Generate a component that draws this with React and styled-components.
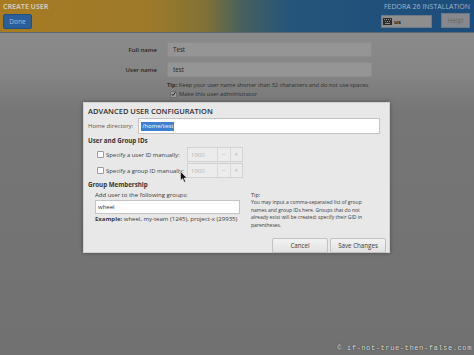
import React from "react";
import styled, { createGlobalStyle } from "styled-components";

const GlobalStyle = createGlobalStyle`
  html, body {
    margin: 0;
    padding: 0;
  }
  body {
    width: 474px;
    height: 355px;
    overflow: hidden;
    font-family: "Open Sans", "Noto Sans", sans-serif;
    background: #727272;
  }
`;

const Page = styled.div`
  position: relative;
  display: flex;
  flex-direction: column;
  width: 474px;
  height: 355px;
  background: linear-gradient(#8a8a8a 33px, #868686 70px, #767676 110px, #717171 100%);
`;

const Header = styled.div`
  height: 33px;
  flex-shrink: 0;
  display: flex;
  justify-content: space-between;
  padding: 3px 4px 0 3px;
  box-sizing: border-box;
  background: linear-gradient(
    90deg,
    #a77b22 0%,
    #9d7a2a 32%,
    #827236 43%,
    #47605c 51%,
    #25557a 61%,
    #1c4c7c 100%
  );
  border-bottom: 1px solid #5d6670;
`;

const HeaderLeft = styled.div`
  display: flex;
  flex-direction: column;
  gap: 3px;
`;

const HeaderRight = styled.div`
  display: flex;
  flex-direction: column;
  align-items: flex-end;
  gap: 2px;
`;

const Spoke = styled.div`
  font-size: 7px;
  font-weight: 700;
  color: #d2c6ae;
  line-height: 8px;
`;

const Product = styled.div`
  font-size: 7px;
  color: #a3b6ca;
  line-height: 8px;
`;

const DoneButton = styled.div`
  width: 29px;
  height: 15px;
  border-radius: 2px;
  background: #2b5f9c;
  border: 1px solid #254f80;
  box-sizing: border-box;
  color: #a9bbd3;
  font-size: 6.5px;
  display: flex;
  align-items: center;
  justify-content: center;
`;

const HeaderTools = styled.div`
  display: flex;
  align-items: center;
  gap: 9px;
`;

const Layout = styled.div`
  width: 51px;
  height: 13px;
  margin-top: 2px;
  background: #8e8e8e;
  border: 1px solid #6f7a86;
  box-sizing: border-box;
  display: flex;
  align-items: center;
  gap: 2px;
  padding-left: 1px;
  font-size: 6px;
  font-weight: 700;
  color: #222;
`;

const HelpButton = styled.div`
  width: 29px;
  height: 15px;
  background: #85898e;
  border: 1px solid #6e7782;
  box-sizing: border-box;
  color: #666;
  font-size: 6.5px;
  display: flex;
  align-items: center;
  justify-content: center;
`;

const Form = styled.div`
  display: grid;
  grid-template-columns: 157px 205px;
  column-gap: 10px;
  row-gap: 5px;
  align-items: center;
  padding-top: 9px;
`;

const Label = styled.div`
  text-align: right;
  font-size: 6px;
  font-weight: 600;
  color: #262626;
`;

const BgInput = styled.div`
  height: 15px;
  background: #959595;
  border: 1px solid #8c8c8c;
  box-sizing: border-box;
  font-size: 6.2px;
  color: #262626;
  display: flex;
  align-items: center;
  padding-left: 5px;
`;

const Hint = styled.div`
  grid-column: 2;
  font-size: 5.7px;
  color: #2e2e2e;
  white-space: nowrap;
  margin-top: -1px;
  b {
    font-weight: 700;
  }
`;

const AdminRow = styled.div`
  grid-column: 2;
  display: flex;
  align-items: center;
  gap: 2px;
  padding-left: 3px;
  margin-top: -4px;
  font-size: 5.8px;
  color: #2e2e2e;
`;

const Dialog = styled.div`
  position: absolute;
  left: 83px;
  top: 102px;
  width: 307px;
  height: 151px;
  box-sizing: border-box;
  background: #e8e8e8;
  border: 1px solid #d0d0d0;
  box-shadow: 0 0 4px rgba(0, 0, 0, 0.35);
  padding: 2px 3px 0 4px;
  color: #3a3a3a;
  font-size: 6px;
`;

const Title = styled.div`
  font-size: 7.5px;
  font-weight: 600;
  color: #2e2e2e;
  line-height: 12px;
`;

const HomeRow = styled.div`
  display: flex;
  align-items: center;
  gap: 5px;
  margin-top: 1px;
  padding-right: 6px;
`;

const Field = styled.div`
  flex: ${(p) => (p.grow ? 1 : "none")};
  height: ${(p) => p.h || 15}px;
  background: #ffffff;
  border: 1px solid #c4c4c4;
  box-sizing: border-box;
  display: flex;
  align-items: center;
  padding-left: 2px;
  font-size: 6px;
  color: #2e2e2e;
`;

const Selected = styled.span`
  background: #3e7fd0;
  color: #ffffff;
  line-height: 9px;
  padding: 0 1px;
`;

const Section = styled.div`
  font-size: 6.2px;
  font-weight: 700;
  color: #333;
  line-height: 10px;
  margin-top: ${(p) => p.mt || 0}px;
`;

const SpinRow = styled.div`
  display: flex;
  align-items: center;
  margin-left: 9px;
  margin-top: ${(p) => p.mt || 0}px;
`;

const Check = styled.div`
  width: 7px;
  height: 7px;
  box-sizing: border-box;
  border: 1px solid ${(p) => (p.dim ? "#6e6e6e" : "#9a9a9a")};
  background: ${(p) => (p.dim ? "#9a9a9a" : "#fafafa")};
  border-radius: 1px;
  display: flex;
  align-items: center;
  justify-content: center;
`;

const CheckText = styled.div`
  width: 81px;
  padding-left: 2px;
  font-size: 5.9px;
  color: #3a3a3a;
`;

const Spin = styled.div`
  display: flex;
  height: 15px;
  width: 56px;
  box-sizing: border-box;
  border: 1px solid #d2d2d2;
  background: #ececec;
`;

const SpinEntry = styled.div`
  width: 26px;
  padding-left: 3px;
  display: flex;
  align-items: center;
  color: #b4b4b4;
  font-size: 6px;
`;

const SpinBtn = styled.div`
  flex: 1;
  border-left: 1px solid #d8d8d8;
  display: flex;
  align-items: center;
  justify-content: center;
  color: #bcbcbc;
  font-size: 7px;
`;

const Columns = styled.div`
  display: flex;
  gap: 11px;
  margin-left: 7px;
`;

const LeftCol = styled.div`
  width: 145px;
  display: flex;
  flex-direction: column;
`;

const Plain = styled.div`
  font-size: 6px;
  line-height: 10px;
  color: ${(p) => p.color || "#3a3a3a"};
  white-space: nowrap;
  b {
    font-weight: 700;
  }
`;

const TipCol = styled.div`
  width: 122px;
  font-size: 5px;
  line-height: 7.5px;
  color: #3a3a3a;
  padding-top: 1px;
`;

const TipHead = styled.div`
  font-size: 5.5px;
  line-height: 8px;
  color: #333;
`;

const Buttons = styled.div`
  display: flex;
  justify-content: flex-end;
  gap: 2px;
  margin-top: 9px;
`;

const DialogButton = styled.div`
  width: 56px;
  height: 15px;
  box-sizing: border-box;
  border: 1px solid #c2c2c2;
  border-radius: 2px;
  background: linear-gradient(#f2f2f2, #e2e2e2);
  font-size: 6.2px;
  color: #3a3a3a;
  display: flex;
  align-items: center;
  justify-content: center;
`;

const Pointer = styled.svg`
  position: absolute;
  left: 180px;
  top: 171px;
`;

const Watermark = styled.div`
  position: absolute;
  right: 2px;
  bottom: 3px;
  font-family: "Liberation Mono", "DejaVu Sans Mono", monospace;
  font-size: 7.2px;
  color: #e4e4e4;
  text-shadow: 0 0 1px #333, 0 0 1px #333;
  letter-spacing: 0.5px;
`;

const CheckMark = ({ color }) => (
  <svg width="6" height="6" viewBox="0 0 6 6">
    <path d="M0.8 3.2 L2.4 4.8 L5.3 1" fill="none" stroke={color} strokeWidth="1.2" />
  </svg>
);

const KeyboardIcon = () => (
  <svg width="9" height="7" viewBox="0 0 9 7">
    <rect x="0" y="0" width="9" height="7" fill="#2a2a2a" />
    <rect x="1" y="1" width="1" height="1" fill="#8e8e8e" />
    <rect x="3" y="1" width="1" height="1" fill="#8e8e8e" />
    <rect x="5" y="1" width="1" height="1" fill="#8e8e8e" />
    <rect x="7" y="1" width="1" height="1" fill="#8e8e8e" />
    <rect x="2" y="3" width="1" height="1" fill="#8e8e8e" />
    <rect x="4" y="3" width="1" height="1" fill="#8e8e8e" />
    <rect x="6" y="3" width="1" height="1" fill="#8e8e8e" />
    <rect x="2" y="5" width="5" height="1" fill="#8e8e8e" />
  </svg>
);

class App extends React.Component {
  render() {
    return (
      <>
        <GlobalStyle />
        <Page>
          <Header>
            <HeaderLeft>
              <Spoke>CREATE USER</Spoke>
              <DoneButton>Done</DoneButton>
            </HeaderLeft>
            <HeaderRight>
              <Product>FEDORA 26 INSTALLATION</Product>
              <HeaderTools>
                <Layout>
                  <KeyboardIcon />
                  us
                </Layout>
                <HelpButton>Help!</HelpButton>
              </HeaderTools>
            </HeaderRight>
          </Header>

          <Form>
            <Label>Full name</Label>
            <BgInput>Test</BgInput>
            <Label>User name</Label>
            <BgInput>test</BgInput>
            <Hint>
              <b>Tip:</b> Keep your user name shorter than 32 characters and do not use spaces.
            </Hint>
            <AdminRow>
              <Check dim>
                <CheckMark color="#1e1e1e" />
              </Check>
              Make this user administrator
            </AdminRow>
          </Form>

          <Dialog>
            <Title>ADVANCED USER CONFIGURATION</Title>
            <HomeRow>
              <Plain color="#555">Home directory:</Plain>
              <Field grow h={16}>
                <Selected>/home/test</Selected>
              </Field>
            </HomeRow>

            <Section mt={2}>User and Group IDs</Section>
            <SpinRow mt={1}>
              <Check />
              <CheckText>Specify a user ID manually:</CheckText>
              <Spin>
                <SpinEntry>1000</SpinEntry>
                <SpinBtn>−</SpinBtn>
                <SpinBtn>+</SpinBtn>
              </Spin>
            </SpinRow>
            <SpinRow mt={1}>
              <Check />
              <CheckText>Specify a group ID manually:</CheckText>
              <Spin>
                <SpinEntry>1000</SpinEntry>
                <SpinBtn>−</SpinBtn>
                <SpinBtn>+</SpinBtn>
              </Spin>
            </SpinRow>

            <Section mt={2}>Group Membership</Section>
            <Columns>
              <LeftCol>
                <Plain>Add user to the following groups:</Plain>
                <Field h={14}>wheel</Field>
                <Plain>
                  <b>Example:</b> wheel, my-team (1245), project-x (29935)
                </Plain>
              </LeftCol>
              <TipCol>
                <TipHead>Tip:</TipHead>
                You may input a comma-separated list of group names and group IDs here.
                Groups that do not already exist will be created; specify their GID in
                parentheses.
              </TipCol>
            </Columns>

            <Buttons>
              <DialogButton>Cancel</DialogButton>
              <DialogButton>Save Changes</DialogButton>
            </Buttons>
          </Dialog>

          <Pointer width="8" height="12" viewBox="0 0 8 12">
            <path d="M0.5 0.5 L0.5 9.5 L2.6 7.6 L4.2 11.2 L5.6 10.6 L4 7.1 L7 7.1 Z" fill="#111" stroke="#eee" strokeWidth="0.6" />
          </Pointer>

          <Watermark>© if-not-true-then-false.com</Watermark>
        </Page>
      </>
    );
  }
}

export default App;
